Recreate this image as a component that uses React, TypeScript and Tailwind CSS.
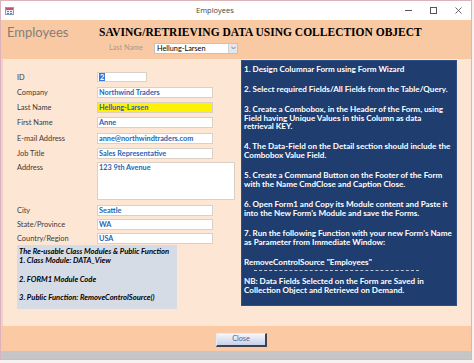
import React from "react";

const lab = "font-['Lato','Liberation_Sans',sans-serif]";

function Field({ label, value, h = 11, w = 116, mt = 4, yellow = false, id = false }: { label: string; value: string; h?: number; w?: number; mt?: number; yellow?: boolean; id?: boolean }) {
  return (
    <div className="flex items-start" style={{ marginTop: mt }}>
      <div className="w-[80px] shrink-0 text-[7.4px] leading-[11px] text-[#3a3a3a]">{label}</div>
      <div
        className={`border border-[#d9d0c6] ${yellow ? "bg-[#fff200]" : "bg-white"} pl-[1px] text-[7.3px] font-bold leading-[9px] text-[#1f66b5] whitespace-nowrap overflow-hidden`}
        style={{ height: h, width: w }}
      >
        {id ? <span className="bg-[#3875d7] text-white px-[1px]">{value}</span> : value}
      </div>
    </div>
  );
}

export default function App() {
  return (
    <div className={`w-[474px] h-[363px] bg-[#f7f1f2] ${lab}`}>
      <div className="w-[472px] h-[360px] border border-[#dcb3bb] flex flex-col">
        {/* Title bar */}
        <div className="h-[19px] bg-white flex items-center relative shrink-0">
          <svg className="ml-[4px]" width="9" height="8" viewBox="0 0 9 8">
            <rect x="0.5" y="0.5" width="8" height="7" fill="#e9eef7" stroke="#8c9cc0" strokeWidth="1" />
            <rect x="1" y="1" width="7" height="2" fill="#c94f6d" />
            <rect x="2" y="4" width="2" height="1" fill="#5a7ab8" />
            <rect x="5" y="4" width="2" height="1" fill="#5a7ab8" />
            <rect x="2" y="6" width="2" height="1" fill="#5a7ab8" />
            <rect x="5" y="6" width="2" height="1" fill="#5a7ab8" />
          </svg>
          <div className="absolute left-[195px] top-[5px] text-[7.5px] leading-[9px] text-[#444] font-['Open_Sans',sans-serif]">Employees</div>
          <div className="ml-auto flex items-center h-full">
            <div className="w-[25px] flex justify-center"><div className="w-[7px] h-px bg-[#555]" /></div>
            <div className="w-[25px] flex justify-center"><div className="w-[7px] h-[7px] border border-[#555]" /></div>
            <div className="w-[25px] flex justify-center">
              <svg width="7" height="7" viewBox="0 0 7 7"><path d="M0.5 0.5L6.5 6.5M6.5 0.5L0.5 6.5" stroke="#555" strokeWidth="0.9" /></svg>
            </div>
          </div>
        </div>

        {/* Header */}
        <div className="h-[39px] bg-[#f9c9a4] shrink-0 flex flex-col">
          <div className="flex items-center h-[18px] mt-[3px]">
            <div className="w-[98px] pl-[6px] text-[13px] leading-[16px] text-[#867d77]">Employees</div>
            <div className="font-['Liberation_Serif',serif] font-bold text-[11.5px] leading-[14px] text-black whitespace-nowrap">
              SAVING/RETRIEVING DATA USING COLLECTION OBJECT
            </div>
          </div>
          <div className="flex items-center mt-[1px] pl-[108px] h-[12px]">
            <div className="w-[45px] text-[7.3px] text-[#ad9985]">Last Name</div>
            <div className="w-[84px] h-[11px] bg-white border border-[#c9c2bb] flex items-center">
              <div className="flex-1 pl-[2px] text-[7.3px] leading-[9px] text-black">Hellung-Larsen</div>
              <div className="w-[9px] h-[9px] bg-[#e4e6ea] border-l border-[#cfd3d9] flex items-center justify-center">
                <svg width="5" height="4" viewBox="0 0 5 4"><path d="M0.5 0.8L2.5 3L4.5 0.8" stroke="#6c7a96" strokeWidth="0.9" fill="none" /></svg>
              </div>
            </div>
          </div>
        </div>

        {/* Detail */}
        <div className="h-[267px] bg-[#fde6d4] shrink-0 flex border-l-2 border-[#f0cfcc]">
          <div className="w-[238px] pl-[14px] pt-[13px] flex flex-col">
            <Field label="ID" value="2" h={10} w={50} mt={0} id />
            <Field label="Company" value="Northwind Traders" />
            <Field label="Last Name" value="Hellung-Larsen" yellow />
            <Field label="First Name" value="Anne" />
            <Field label="E-mail Address" value="anne@northwindtraders.com" mt={5} />
            <Field label="Job Title" value="Sales Representative" />
            <Field label="Address" value="123 9th Avenue" h={38} w={138} mt={3} />
            <Field label="City" value="Seattle" mt={5} />
            <Field label="State/Province" value="WA" mt={3} />
            <Field label="Country/Region" value="USA" mt={3} />
            <div className="mt-[1px] w-[160px] h-[64px] bg-[#d5dce6] pl-[2px] pt-[2px] text-[7.6px] leading-[9.2px] font-bold italic text-black whitespace-nowrap">
              <div>The Re-usable Class Modules &amp; Public Function</div>
              <div>1. Class Module: DATA_View</div>
              <div className="mt-[9.2px]">2. FORM1 Module Code</div>
              <div className="mt-[9.2px]">3. Public Function: RemoveControlSource()</div>
            </div>
          </div>
          <div className="mt-[1px] w-[216px] h-[246px] bg-[#1f3d6f] border border-[#2d4f86] pl-[2px] pt-[4px] text-[8.1px] leading-[8.5px] font-bold text-white whitespace-nowrap overflow-hidden">
            <div>1. Design Columnar Form using Form Wizard</div>
            <div className="mt-[11.5px]">2. Select required Fields/All Fields from the Table/Query.</div>
            <div className="mt-[11.5px]">3. Create a Combobox, in the Header of the Form, using<br />Field having Unique Values in this Column as data<br />retrieval KEY.</div>
            <div className="mt-[11.5px]">4. The Data-Field on the Detail section should include the<br />Combobox Value Field.</div>
            <div className="mt-[12px]">5. Create a Command Button on the Footer of the Form<br />with the Name CmdClose and Caption Close.</div>
            <div className="mt-[12px]">6. Open Form1 and Copy its Module content and Paste it<br />into the New Form's Module and save the Forms.</div>
            <div className="mt-[12px]">7. Run the following Function with your new Form's Name<br />as Parameter from Immediate Window:</div>
            <div className="mt-[12px]">RemoveControlSource "Employees"</div>
            <div className="ml-[10px] w-[165px] h-[8.5px] flex items-center">
              <div className="w-full border-t border-dashed border-[#b8c4d8]" />
            </div>
            <div className="mt-[2px]">NB: Data Fields Selected on the Form are Saved in<br />Collection Object and Retrieved on Demand.</div>
          </div>
        </div>

        {/* Footer */}
        <div className="h-[25px] bg-[#fbcaa5] shrink-0 flex items-start pl-[215px] pt-[7px]">
          <div className="w-[51px] h-[14px] bg-gradient-to-b from-[#f4f6fc] to-[#c9d1ea] border border-t-[#e6eaf5] border-l-[#e6eaf5] border-r-2 border-b-2 border-r-[#3c4250] border-b-[#3c4250] flex items-center justify-center text-[7.3px] text-[#56627e]">
            Close
          </div>
        </div>
        <div className="h-[8px] bg-[#c6c6c8] shrink-0" />
      </div>
    </div>
  );
}
